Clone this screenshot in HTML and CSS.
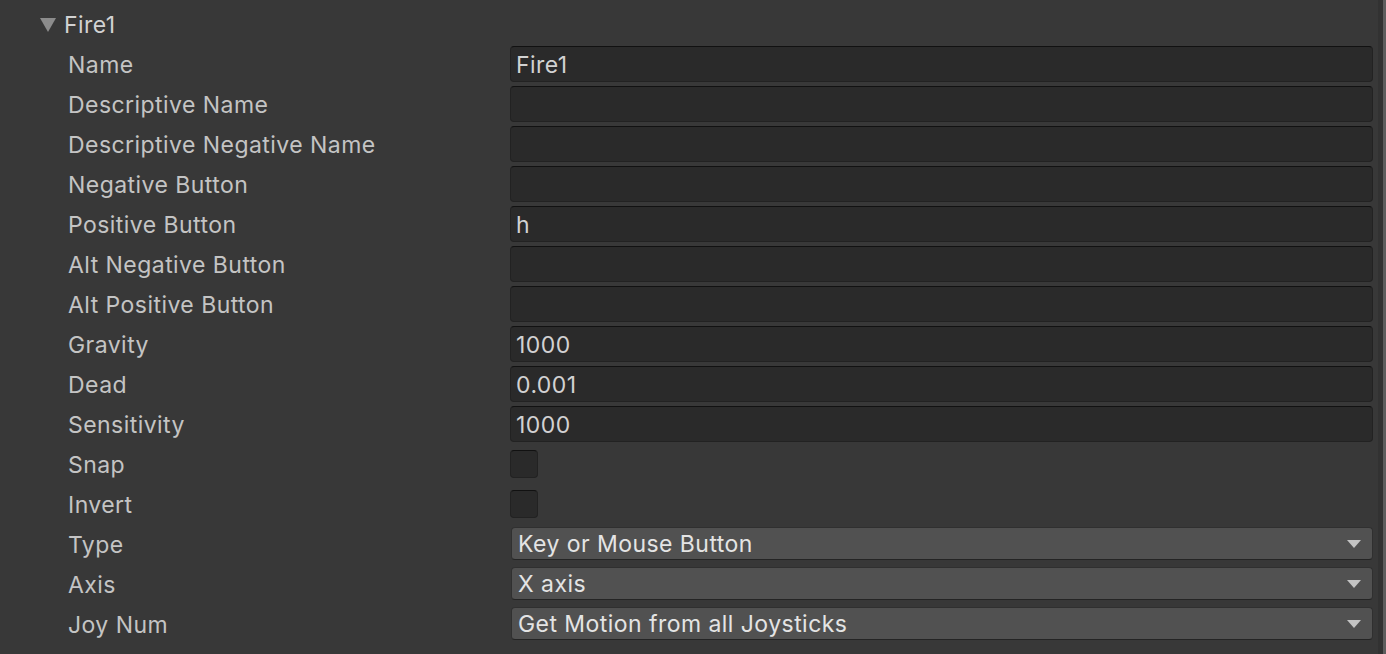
FILE: index.html
```html
<!DOCTYPE html>
<html>
<head>
<meta charset="utf-8">
<link rel="stylesheet" href="styles.css">
</head>
<body>
<div class="inspector">
  <div class="content">
    <div class="foldout"><span class="fold-arrow"></span><span class="fold-title">Fire1</span></div>
    <div class="row"><div class="label">Name</div><div class="field">Fire1</div></div>
    <div class="row"><div class="label">Descriptive Name</div><div class="field"></div></div>
    <div class="row"><div class="label">Descriptive Negative Name</div><div class="field"></div></div>
    <div class="row"><div class="label">Negative Button</div><div class="field"></div></div>
    <div class="row"><div class="label">Positive Button</div><div class="field">h</div></div>
    <div class="row"><div class="label">Alt Negative Button</div><div class="field"></div></div>
    <div class="row"><div class="label">Alt Positive Button</div><div class="field"></div></div>
    <div class="row"><div class="label">Gravity</div><div class="field">1000</div></div>
    <div class="row"><div class="label">Dead</div><div class="field">0.001</div></div>
    <div class="row"><div class="label">Sensitivity</div><div class="field">1000</div></div>
    <div class="row"><div class="label">Snap</div><div class="checkbox"></div></div>
    <div class="row"><div class="label">Invert</div><div class="checkbox"></div></div>
    <div class="row"><div class="label">Type</div><div class="dropdown"><span>Key or Mouse Button</span><span class="dd-arrow"></span></div></div>
    <div class="row"><div class="label">Axis</div><div class="dropdown"><span>X axis</span><span class="dd-arrow"></span></div></div>
    <div class="row"><div class="label">Joy Num</div><div class="dropdown"><span>Get Motion from all Joysticks</span><span class="dd-arrow"></span></div></div>
  </div>
  <div class="scroll-track"></div>
  <div class="scroll-edge"></div>
</div>
</body>
</html>
```
FILE: styles.css
```css
html, body {
  margin: 0;
  padding: 0;
  background: #383838;
  overflow: hidden;
}
body {
  font-family: "Inter", "Noto Sans", sans-serif;
  font-size: 23px;
  letter-spacing: 0.45px;
  color: #c4c4c4;
}
.inspector {
  display: flex;
  width: 1386px;
  height: 654px;
}
.content {
  width: 1378px;
  padding-top: 4px;
  box-sizing: border-box;
}
.scroll-track {
  width: 5px;
  background: #323232;
}
.scroll-edge {
  width: 3px;
  background: #5d5d5d;
}
.foldout {
  height: 40px;
  display: flex;
  align-items: center;
  padding-left: 40px;
  padding-top: 2px;
  box-sizing: border-box;
}
.fold-arrow {
  width: 0;
  height: 0;
  border-left: 8px solid transparent;
  border-right: 8px solid transparent;
  border-top: 14px solid #8c8c8c;
  margin-right: 8px;
  margin-top: -1px;
}
.fold-title {
  color: #d2d2d2;
}
.row {
  height: 40px;
  display: grid;
  grid-template-columns: 442px 863px;
  align-items: center;
  padding-left: 68px;
}
.label {
  white-space: nowrap;
  padding-top: 2px;
}
.field {
  height: 36px;
  box-sizing: border-box;
  background: #2a2a2a;
  border: 1px solid #222222;
  border-top-color: #111111;
  border-radius: 4px;
  padding-left: 5px;
  padding-top: 2px;
  display: flex;
  align-items: center;
  color: #d2d2d2;
}
.checkbox {
  width: 28px;
  height: 28px;
  box-sizing: border-box;
  background: #2a2a2a;
  border: 1px solid #222222;
  border-top-color: #111111;
  border-radius: 4px;
}
.dropdown {
  height: 33px;
  margin-left: 1px;
  width: 862px;
  box-sizing: border-box;
  background: #515151;
  border: 1px solid #303030;
  border-bottom-color: #242424;
  border-radius: 4px;
  padding-left: 6px;
  padding-right: 11px;
  display: flex;
  align-items: center;
  justify-content: space-between;
  color: #e4e4e4;
  margin-top: -1px;
}
.dd-arrow {
  width: 0;
  height: 0;
  border-left: 7px solid transparent;
  border-right: 7px solid transparent;
  border-top: 8px solid #c4c4c4;
}
```
